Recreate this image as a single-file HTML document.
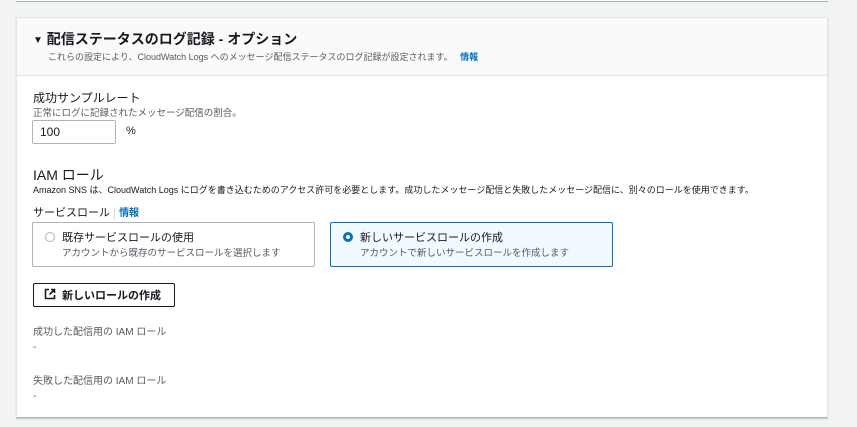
<!DOCTYPE html>
<html><head><meta charset="utf-8"><style>
*{margin:0;padding:0;box-sizing:border-box}
body{width:857px;height:427px;background:#f2f3f3;font-family:"Liberation Sans","Noto Sans CJK JP",sans-serif;color:#16191f;position:relative;overflow:hidden}
.a{position:absolute;white-space:nowrap}
.prev{left:16px;top:-10px;width:812px;height:12px;background:#fff;border-bottom:1px solid #aab7b8;border-right:1px solid #d5dbdb}
.panel{left:16px;top:17px;width:812px;height:401px;background:#fff;border:1px solid #e3e6e6;border-bottom:1px solid #aab7b8;box-shadow:0 1px 1px rgba(0,28,36,.2)}
.hdr{left:17px;top:18px;width:810px;height:58px;background:#fafafa;border-bottom:1px solid #e3e6e6}
.info{color:#0073bb;font-weight:bold}
.g{color:#545b64}
</style></head><body>
<div class="a prev"></div>
<div class="a panel"></div>
<div class="a hdr"></div>
<div class="a" style="left:33px;top:29px;font-size:14px;font-weight:bold"><span style="font-size:10px;position:relative;top:-1px">▼</span> 配信ステータスのログ記録 - オプション</div>
<div class="a g" style="left:48px;top:50px;font-size:9px">これらの設定により、CloudWatch Logs へのメッセージ配信ステータスのログ記録が設定されます。 &nbsp;&nbsp;<span class="info">情報</span></div>
<div class="a" style="left:33px;top:89px;font-size:12px">成功サンプルレート</div>
<div class="a g" style="left:33px;top:105px;font-size:9.5px">正常にログに記録されたメッセージ配信の割合。</div>
<div class="a" style="left:32px;top:120px;width:84px;height:24px;border:1px solid #aab7b8;border-radius:2px;font-size:12px;padding:4px 7px">100</div>
<div class="a" style="left:126px;top:125px;font-size:11px">%</div>
<div class="a" style="left:33px;top:165px;font-size:14px">IAM ロール</div>
<div class="a" style="left:33px;top:183px;font-size:9px;color:#16191f">Amazon SNS は、CloudWatch Logs にログを書き込むためのアクセス許可を必要とします。成功したメッセージ配信と失敗したメッセージ配信に、別々のロールを使用できます。</div>
<div class="a" style="left:33px;top:204px;font-size:11px">サービスロール <span style="border-left:1px solid #d5dbdb;margin-left:1px;padding-left:4px;font-size:10px" class="info">情報</span></div>
<div class="a" style="left:32px;top:222px;width:283px;height:45px;border:1px solid #aab7b8;border-radius:2px"></div>
<div class="a" style="left:45px;top:232px;width:10px;height:10px;border:1px solid #aab7b8;border-radius:50%"></div>
<div class="a" style="left:62px;top:229px;font-size:11px">既存サービスロールの使用</div>
<div class="a g" style="left:62px;top:245px;font-size:9.5px">アカウントから既存のサービスロールを選択します</div>
<div class="a" style="left:330px;top:222px;width:283px;height:45px;border:1px solid #0073bb;background:#f1faff;border-radius:2px"></div>
<div class="a" style="left:343px;top:232px;width:10px;height:10px;border:3px solid #0073bb;border-radius:50%;background:#fff"></div>
<div class="a" style="left:360px;top:229px;font-size:11px">新しいサービスロールの作成</div>
<div class="a g" style="left:360px;top:245px;font-size:9.5px">アカウントで新しいサービスロールを作成します</div>
<div class="a" style="left:33px;top:283px;width:142px;height:24px;border:1px solid #16191f;border-radius:2px;background:#fff"></div>
<svg class="a" style="left:44px;top:288px" width="12" height="12" viewBox="0 0 12 12"><path d="M5 1.5H1.5v9h9V7M7 1.5h3.5V5M10.5 1.5L5.5 6.5" fill="none" stroke="#16191f" stroke-width="1.6"/></svg>
<div class="a" style="left:62px;top:287px;font-size:11px;font-weight:bold">新しいロールの作成</div>
<div class="a g" style="left:33px;top:323px;font-size:10px">成功した配信用の IAM ロール</div>
<div class="a g" style="left:33px;top:342px;font-size:10px">-</div>
<div class="a g" style="left:33px;top:372px;font-size:10px">失敗した配信用の IAM ロール</div>
<div class="a g" style="left:33px;top:391px;font-size:10px">-</div>
</body></html>
